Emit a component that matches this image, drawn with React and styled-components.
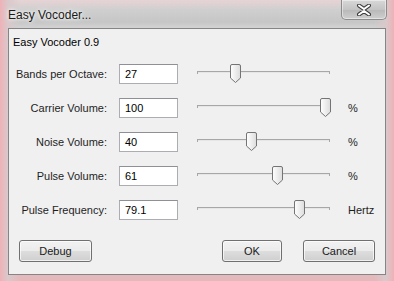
import styled, { createGlobalStyle } from "styled-components";

const GlobalStyle = createGlobalStyle`
  html, body {
    margin: 0;
    padding: 0;
    background: #e9b9bd;
  }
  * {
    box-sizing: border-box;
  }
`;

const rows = [
  { label: "Bands per Octave:", value: "27", pos: 27, unit: "" },
  { label: "Carrier Volume:", value: "100", pos: 100, unit: "%" },
  { label: "Noise Volume:", value: "40", pos: 40, unit: "%" },
  { label: "Pulse Volume:", value: "61", pos: 61, unit: "%" },
  { label: "Pulse Frequency:", value: "79.1", pos: 79.1, unit: "Hertz" },
];

const App = () => {
  return (
    <>
      <GlobalStyle />
      <Frame>
        <TitleBar>
          <Title>Easy Vocoder...</Title>
          <CloseButton>
            <svg width="16" height="12" viewBox="0 0 16 12">
              <path
                d="M3 1.5 L8 5 L13 1.5 M3 10.5 L8 7 L13 10.5"
                fill="none"
                stroke="#3c3c3c"
                strokeWidth="4"
                strokeLinecap="round"
              />
              <path
                d="M3 1.5 L8 5 L13 1.5 M3 10.5 L8 7 L13 10.5"
                fill="none"
                stroke="#ffffff"
                strokeWidth="2"
                strokeLinecap="round"
              />
            </svg>
          </CloseButton>
        </TitleBar>
        <Client>
          <Heading>Easy Vocoder 0.9</Heading>
          <Form>
            {rows.map((r) => (
              <Row key={r.label}>
                <Label>{r.label}</Label>
                <TextBox>{r.value}</TextBox>
                <Slider>
                  <Track />
                  <Thumb style={{ left: `${(r.pos / 100) * 123}px` }}>
                    <svg width="11" height="19" viewBox="0 0 11 19">
                      <defs>
                        <linearGradient id="tg" x1="0" y1="0" x2="1" y2="0">
                          <stop offset="0" stopColor="#ffffff" />
                          <stop offset="1" stopColor="#dcdcdc" />
                        </linearGradient>
                      </defs>
                      <path
                        d="M0.5 2 Q0.5 0.5 2 0.5 H9 Q10.5 0.5 10.5 2 V14 L5.5 18.5 L0.5 14 Z"
                        fill="url(#tg)"
                        stroke="#747474"
                      />
                    </svg>
                  </Thumb>
                </Slider>
                <Unit>{r.unit}</Unit>
              </Row>
            ))}
          </Form>
          <ButtonBar>
            <Button $width={73}>Debug</Button>
            <Spacer />
            <Button $width={60}>OK</Button>
            <Button $width={72}>Cancel</Button>
          </ButtonBar>
        </Client>
      </Frame>
    </>
  );
};

const Frame = styled.div`
  width: 394px;
  height: 281px;
  display: flex;
  flex-direction: column;
  padding: 0 8px 6px 8px;
  background:
    linear-gradient(90deg, #eeb2b7 0px, #d9c9cb 8px, rgba(0,0,0,0) 20px, rgba(0,0,0,0) 374px, #d9c9cb 386px, #eeb2b7 394px),
    linear-gradient(180deg, #e7d3d5 0px, #cfcfcf 10px, #c6c6c6 22px, #d3d3d3 28px, #e3b9bc 278px);
  font-family: "Liberation Sans", Arial, sans-serif;
  font-size: 11px;
  color: #000;
`;

const TitleBar = styled.div`
  height: 28px;
  display: flex;
  align-items: flex-start;
  margin: 0 -1px 0 0;
`;

const Title = styled.div`
  padding-top: 8px;
  font-size: 12px;
  color: #1a1a1a;
  text-shadow: 0 0 6px #ffffff, 0 0 3px #ffffff;
`;

const CloseButton = styled.div`
  margin-left: auto;
  width: 46px;
  height: 20px;
  display: flex;
  align-items: center;
  justify-content: center;
  border: 1px solid #8c8c8c;
  border-top: none;
  border-radius: 0 0 5px 5px;
  background: linear-gradient(180deg, #d8d8d8 0%, #c4c4c4 50%, #b8b8b8 51%, #cfcfcf 100%);
  box-shadow: inset 0 0 0 1px rgba(255, 255, 255, 0.45);
`;

const Client = styled.div`
  flex: 1;
  display: flex;
  flex-direction: column;
  background: #f0f0f0;
  border: 1px solid #858585;
  padding: 6px 0 0 0;
`;

const Heading = styled.div`
  padding-left: 4px;
  height: 15px;
  line-height: 15px;
`;

const Form = styled.div`
  display: flex;
  flex-direction: column;
  gap: 14px;
  margin-top: 14px;
`;

const Row = styled.div`
  display: grid;
  grid-template-columns: 98px 59px 133px 40px;
  column-gap: 12px;
  align-items: center;
  height: 20px;
  & > :nth-child(3) {
    margin-left: 7px;
  }
`;

const Label = styled.div`
  text-align: right;
  white-space: nowrap;
  color: #1e1e1e;
`;

const TextBox = styled.div`
  height: 20px;
  line-height: 18px;
  padding-left: 5px;
  background: #fff;
  border: 1px solid #abadb3;
  border-top-color: #8e9096;
`;

const Slider = styled.div`
  position: relative;
  width: 133px;
  height: 20px;
`;

const Track = styled.div`
  position: absolute;
  left: 0;
  right: 0;
  top: 7px;
  height: 2px;
  border-top: 1px solid #a7a7a7;
  border-bottom: 1px solid #e6e6e6;
  &::before,
  &::after {
    content: "";
    position: absolute;
    top: -1px;
    width: 1px;
    height: 3px;
    background: #a7a7a7;
  }
  &::before {
    left: 0;
  }
  &::after {
    right: 0;
  }
`;

const Thumb = styled.div`
  position: absolute;
  top: 0;
  width: 11px;
  height: 19px;
  & svg {
    display: block;
  }
`;

const Unit = styled.div`
  margin-left: 13px;
  white-space: nowrap;
  color: #1e1e1e;
`;

const ButtonBar = styled.div`
  display: flex;
  gap: 21px;
  padding: 0 10px 0 10px;
  margin-top: 20px;
`;

const Spacer = styled.div`
  flex: 1;
`;

const Button = styled.div`
  width: ${(p) => p.$width}px;
  height: 22px;
  display: flex;
  align-items: center;
  justify-content: center;
  border: 1px solid #707070;
  border-radius: 3px;
  background: linear-gradient(180deg, #f2f2f2 0%, #ebebeb 50%, #dddddd 51%, #cfcfcf 100%);
  box-shadow: inset 0 0 0 1px rgba(255, 255, 255, 0.7);
  color: #1a1a1a;
`;

export default App;
